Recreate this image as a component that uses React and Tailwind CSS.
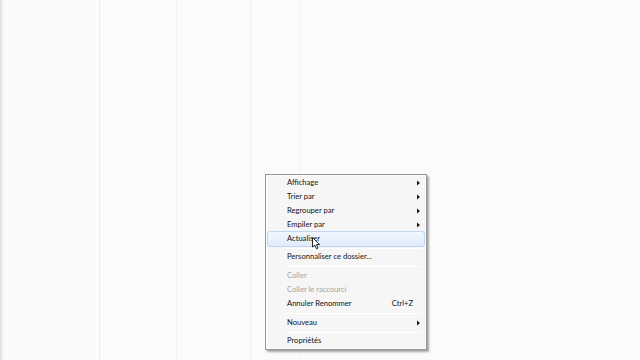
import React from "react";

const items = [
  { label: "Affichage", sub: true },
  { label: "Trier par", sub: true },
  { label: "Regrouper par", sub: true },
  { label: "Empiler par", sub: true },
  { label: "Actualiser", active: true },
  { sep: "h-[4px]" },
  { label: "Personnaliser ce dossier..." },
  { sep: "h-[5px]" },
  { label: "Coller", disabled: true },
  { label: "Coller le raccourci", disabled: true },
  { label: "Annuler Renommer", shortcut: "Ctrl+Z" },
  { sep: "h-[5px]" },
  { label: "Nouveau", sub: true },
  { sep: "h-[4px]" },
  { label: "Propriétés" },
];

function Arrow() {
  return (
    <svg width="3" height="6" viewBox="0 0 3 6" className="block">
      <path d="M0 0.5 L3 3 L0 5.5 Z" fill="#1b1b1b" />
    </svg>
  );
}

function Cursor() {
  return (
    <svg width="9" height="13" viewBox="0 0 9 13" className="block">
      <path
        d="M0.5 0.5 L0.5 10 L2.8 8 L4.4 11.8 L6 11.1 L4.5 7.5 L7.6 7.5 Z"
        fill="#ffffff"
        stroke="#111"
        strokeWidth="0.9"
        strokeLinejoin="round"
      />
    </svg>
  );
}

function MenuRow({ item }) {
  if (item.sep) {
    return (
      <div className={`${item.sep} flex items-center pl-[19px] pr-[3px]`}>
        <div className="h-px w-full bg-[#e2e3e3] border-b border-white" />
      </div>
    );
  }

  return (
    <div
      className={`relative h-[14px] flex items-center pl-[19px] pr-[4px] pb-[1px] mx-[1px] rounded-[2px] ${
        item.active
          ? "bg-gradient-to-b from-[#f2f7fe] to-[#e0ecfb] outline outline-1 outline-[#c0d7f3]"
          : ""
      }`}
    >
      <span
        className={`flex-1 ${item.disabled ? "text-[#a3a3a3]" : "text-[#151515]"}`}
      >
        {item.label}
      </span>
      {item.shortcut && (
        <span className="text-[#151515] mr-[7px]">{item.shortcut}</span>
      )}
      {item.sub && <Arrow />}
      {item.active && (
        <span className="absolute left-[44px] top-[5px]">
          <Cursor />
        </span>
      )}
    </div>
  );
}

export default function App() {
  return (
    <div className="relative w-[640px] h-[360px] overflow-hidden bg-[#fbfbfb] font-['Lato','Liberation_Sans',sans-serif]">
      {/* faint column dividers from the details view */}
      <div className="flex h-full">
        <div className="w-[100px] border-l-[2px] border-l-[#dfe5ea] border-r border-r-[#efefef] bg-gradient-to-r from-[#f3f6f9] to-[#fbfbfb] to-[4%]" />
        <div className="w-[77px] border-r border-[#f0f0f0]" />
        <div className="w-[74px] border-r border-[#f0f0f0]" />
        <div className="w-[49px] border-r border-[#f3f3f3]" />
        <div className="flex-1" />
      </div>

      {/* context menu */}
      <div className="absolute left-[265px] top-[174px] w-[162px] border border-[#979797] bg-[#f6f6f6] shadow-[2px_2px_2px_rgba(0,0,0,0.35)] text-[7.6px] leading-none">
        <div className="border border-[#fcfcfc]">
          {items.map((item, i) => (
            <MenuRow key={i} item={item} />
          ))}
        </div>
      </div>
    </div>
  );
}
